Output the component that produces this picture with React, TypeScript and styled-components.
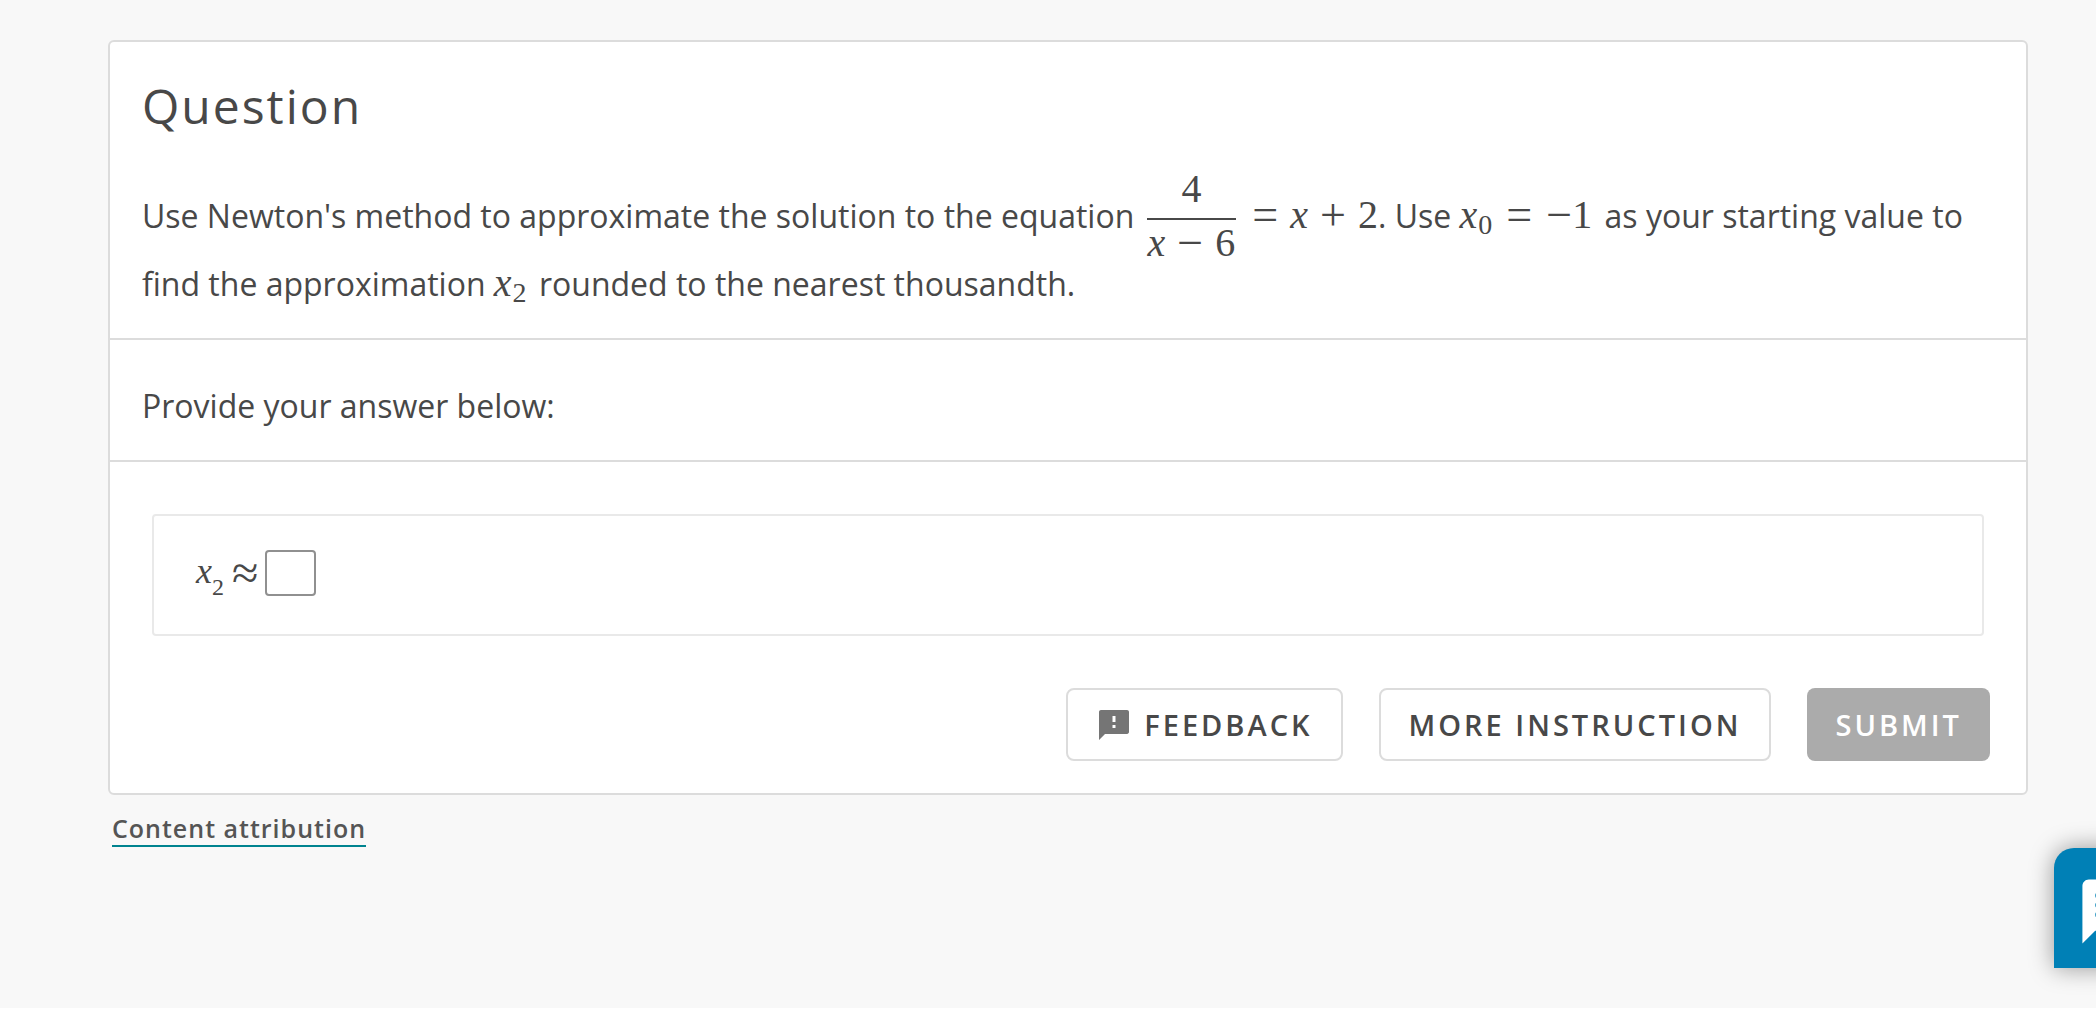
import React, { useState } from "react";
import styled, { createGlobalStyle } from "styled-components";

const sans = `"Open Sans", "Noto Sans", sans-serif`;
const serif = `"Liberation Serif", "Times New Roman", serif`;
const ink = "#484848";
const line = "#dcdcdc";

const GlobalStyle = createGlobalStyle`
  *, *::before, *::after { box-sizing: border-box; }
  body {
    margin: 0;
    background: #fff;
    color: ${ink};
    font-family: ${sans};
    font-size: 32px;
  }
`;

const Page = styled.main`
  min-height: calc(100vh - 6px);
  padding: 40px 68px 40px 108px;
  background: #f8f8f8;
`;

const Card = styled.section`
  border: 2px solid ${line};
  border-radius: 6px;
  background: #fff;
`;

const Prompt = styled.div`
  padding: 32px 32px 35px;
  border-bottom: 2px solid ${line};
`;

const Title = styled.h1`
  margin: 0 0 35px;
  font-size: 48px;
  font-weight: 500;
  line-height: 64px;
  letter-spacing: 2px;
`;

const Text = styled.p`
  margin: 0;
  line-height: 38px;
`;

const Instruction = styled.div`
  padding: 48px 32px 36px;
  border-bottom: 2px solid ${line};
  line-height: 36px;
`;

const MathText = styled.span<{ $trail?: boolean }>`
  margin-right: ${(p) => (p.$trail ? 4 : 0)}px;
  font-family: ${serif};
  font-size: 40px;
  line-height: 36px;
  white-space: nowrap;
`;

const Var = styled.i`
  font-style: italic;
`;

const Sub = styled.sub`
  margin-left: 1px;
  font-size: 28px;
  line-height: 1px;
  vertical-align: -6px;
`;

const Op = styled.span<{ $gap?: number }>`
  margin: 0 ${(p) => p.$gap ?? 12}px;
  font-size: 46px;
  line-height: 1px;
  vertical-align: -2px;
`;

const Fraction = styled.span`
  display: inline-flex;
  flex-direction: column;
  align-items: stretch;
  margin: 0 4px;
  vertical-align: middle;
  text-align: center;
  line-height: 32px;
`;

const Numerator = styled.span`
  height: 47px;
  padding: 0 1px 15px;
  border-bottom: 2px solid ${ink};
`;

const Denominator = styled.span`
  height: 45px;
  padding: 7px 1px 6px;
`;

const Work = styled.form`
  padding: 52px 36px 32px;
`;

const AnswerBox = styled.div`
  display: flex;
  align-items: center;
  height: 122px;
  margin: 0 6px;
  padding: 0 42px 4px;
  border: 2px solid #e9e9e9;
  border-radius: 4px;
`;

const AnswerLabel = styled.label`
  padding-bottom: 4px;
  font-family: ${serif};
  font-size: 36px;
  line-height: 46px;
  white-space: nowrap;
`;

const AnswerSub = styled.sub`
  font-size: 24px;
  line-height: 1px;
  vertical-align: -12px;
`;

const Approx = styled.span`
  margin: 0 1px 0 8px;
  font-size: 48px;
  line-height: 1px;
  vertical-align: -6px;
`;

const AnswerInput = styled.input`
  width: 51px;
  height: 46px;
  margin-left: 6px;
  padding: 0 6px;
  border: 2px solid #909090;
  border-radius: 4px;
  background: #fff;
  color: ${ink};
  font: 32px ${serif};
`;

const Actions = styled.div`
  display: flex;
  flex-wrap: wrap;
  justify-content: flex-end;
  gap: 36px;
  margin-top: 52px;
`;

const Button = styled.button<{ $solid?: boolean }>`
  display: flex;
  align-items: center;
  gap: 12px;
  height: 73px;
  padding: 0 28px;
  border: ${(p) => (p.$solid ? "0" : `2px solid ${line}`)};
  border-radius: 8px;
  background: ${(p) => (p.$solid ? "#ababab" : "#fff")};
  color: ${(p) => (p.$solid ? "#fff" : ink)};
  font-family: ${sans};
  font-size: 29px;
  font-weight: 600;
  letter-spacing: 3px;
  text-transform: uppercase;
`;

const Attribution = styled.a`
  display: inline-block;
  margin: 16px 0 0 4px;
  border-bottom: 2px solid #00838f;
  color: #555;
  font-size: 25px;
  font-weight: 600;
  line-height: 34px;
  letter-spacing: 1px;
  text-decoration: none;
`;

const ChatTab = styled.button`
  position: fixed;
  right: -78px;
  bottom: 46px;
  display: flex;
  align-items: center;
  justify-content: center;
  width: 120px;
  height: 120px;
  padding: 6px 0 0;
  border: 0;
  border-radius: 20px 20px 0 0;
  background: #0080b6;
  box-shadow: 0 0 24px rgba(0, 0, 0, 0.4);
`;

const FeedbackIcon = () => (
  <svg width="36" height="36" viewBox="0 0 24 24" fill="#757575" aria-hidden="true">
    <path d="M20.700 2H3.300c-.7 0-1.300.6-1.300 1.300V22l4-4h14.700c.7 0 1.300-.6 1.300-1.300V3.300c0-.7-.6-1.300-1.300-1.300zM13 14h-2v-2h2v2zm0-4h-2V6h2v4z" />
  </svg>
);

const ChatIcon = () => (
  <svg width="77" height="77" viewBox="0 0 24 24" fill="#fff" aria-hidden="true">
    <path d="M20 2H4c-1.100 0-2 .9-2 2v18l4-4h14c1.100 0 2-.9 2-2V4c0-1.100-.9-2-2-2z" />
    <g stroke="#0080b6" strokeWidth="2" strokeLinecap="round">
      <path d="M7 7h10M7 10h10M7 13h7" />
    </g>
  </svg>
);

export default function App() {
  const [answer, setAnswer] = useState("");

  return (
    <>
      <GlobalStyle />
      <Page>
        <Card>
          <Prompt>
            <Title>Question</Title>
            <Text>
              Use Newton's method to approximate the solution to the equation{" "}
              <MathText>
                <Fraction>
                  <Numerator>4</Numerator>
                  <Denominator>
                    <Var>x</Var>
                    <Op>−</Op>6
                  </Denominator>
                </Fraction>
                <Op>=</Op>
                <Var>x</Var>
                <Op>+</Op>2
              </MathText>
              . Use{" "}
              <MathText $trail>
                <Var>x</Var>
                <Sub>0</Sub>
                <Op $gap={14}>=</Op>
                <Op $gap={0}>−</Op>1
              </MathText>{" "}
              as your starting value to{" "}
              {"find the approximation "}
              <MathText $trail>
                <Var>x</Var>
                <Sub>2</Sub>
              </MathText>{" "}
              rounded to the nearest thousandth.
            </Text>
          </Prompt>
          <Instruction>Provide your answer below:</Instruction>
          <Work onSubmit={(e) => e.preventDefault()}>
            <AnswerBox>
              <AnswerLabel htmlFor="answer">
                <Var>x</Var>
                <AnswerSub>2</AnswerSub>
                <Approx>≈</Approx>
              </AnswerLabel>
              <AnswerInput id="answer" value={answer} onChange={(e) => setAnswer(e.target.value)} />
            </AnswerBox>
            <Actions>
              <Button type="button">
                <FeedbackIcon />
                Feedback
              </Button>
              <Button type="button">More Instruction</Button>
              <Button type="submit" $solid>
                Submit
              </Button>
            </Actions>
          </Work>
        </Card>
        <Attribution href="#attribution">Content attribution</Attribution>
      </Page>
      <ChatTab type="button" aria-label="Open chat">
        <ChatIcon />
      </ChatTab>
    </>
  );
}
